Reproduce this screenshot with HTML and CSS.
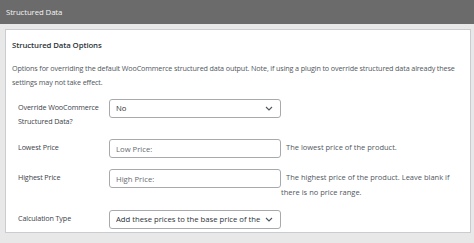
FILE: index.html
```html
<!DOCTYPE html>
<html lang="en">
<head>
  <meta charset="UTF-8" />
  <title>Structured Data</title>
  <link rel="stylesheet" href="styles.css">
</head>
<body>
  <div class="topbar">Structured Data</div>

  <div class="panel">
    <h2 class="panel-title">Structured Data Options</h2>
    <p class="intro">Options for overriding the default WooCommerce structured data output. Note, if using a plugin to override structured data already these settings may not take effect.</p>

    <div class="form">
      <label class="form-label">Override WooCommerce Structured Data?</label>
      <div class="field">
        <div class="select">
          <span class="select-text">No</span>
          <svg class="chevron" width="8" height="5" viewBox="0 0 8 5"><path d="M1 1 4 4 7 1" fill="none" stroke="#50575e" stroke-width="1.1"/></svg>
        </div>
      </div>

      <label class="form-label">Lowest Price</label>
      <div class="field">
        <input class="text-input" type="text" placeholder="Low Price:" />
        <span class="desc">The lowest price of the product.</span>
      </div>

      <label class="form-label">Highest Price</label>
      <div class="field">
        <input class="text-input" type="text" placeholder="High Price:" />
        <span class="desc">The highest price of the product. Leave blank if there is no price range.</span>
      </div>

      <label class="form-label">Calculation Type</label>
      <div class="field">
        <div class="select">
          <span class="select-text">Add these prices to the base price of the product</span>
          <svg class="chevron" width="8" height="5" viewBox="0 0 8 5"><path d="M1 1 4 4 7 1" fill="none" stroke="#50575e" stroke-width="1.1"/></svg>
        </div>
      </div>
    </div>
  </div>
</body>
</html>
```

FILE: styles.css
```css
* { box-sizing: border-box; margin: 0; padding: 0; }
body {
  background: #e8e8e9;
  font-family: "Open Sans", "Noto Sans", sans-serif;
  color: #3c434a;
  width: 474px;
  height: 243px;
  overflow: hidden;
}
.topbar {
  height: 24px;
  background: #6b6b6b;
  color: #f4f4f4;
  font-size: 7.8px;
  letter-spacing: -0.1px;
  line-height: 25px;
  padding-left: 6px;
}
.panel {
  margin: 5px 3px 0 5px;
  height: 204px;
  background: #fff;
  border: 1px solid #c9cdd1;
  padding: 10px 6px 0 6px;
}
.panel-title {
  font-size: 7.8px;
  font-weight: 600;
  letter-spacing: -0.1px;
  line-height: 11px;
  color: #2c3338;
  margin-bottom: 10px;
}
.intro {
  font-size: 7.2px;
  letter-spacing: -0.13px;
  line-height: 14px;
  color: #50575e;
  margin-bottom: 10px;
}
.form {
  display: grid;
  grid-template-columns: 91px 1fr;
  row-gap: 11px;
  padding-left: 6px;
}
.form-label {
  font-size: 7.2px;
  letter-spacing: -0.12px;
  line-height: 14px;
  padding-top: 1px;
  padding-right: 3px;
  color: #3c434a;
}
.field {
  display: flex;
  align-items: flex-start;
}
.select, .text-input {
  width: 172px;
  height: 19px;
  flex-shrink: 0;
  border: 1px solid #a7aaad;
  border-radius: 3px;
  background: #fff;
  font-family: inherit;
  font-size: 7.7px;
  color: #2c3338;
  padding: 0 6px;
}
.select {
  display: flex;
  align-items: center;
  gap: 3px;
}
.select-text {
  flex: 1;
  white-space: nowrap;
  overflow: hidden;
  line-height: 17px;
}
.chevron { flex-shrink: 0; margin-right: 1px; }
.text-input::placeholder { color: #686d72; }
.desc {
  font-size: 7.5px;
  line-height: 14.5px;
  color: #50575e;
  padding-top: 1px;
  text-indent: 5px;
}
```
